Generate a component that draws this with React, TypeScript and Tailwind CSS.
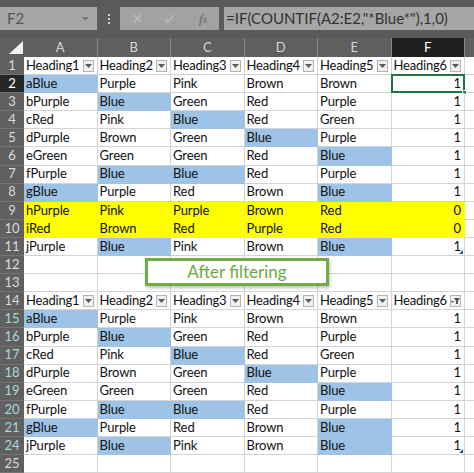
import React from 'react'

const BLUE = '#9dc3e6'
const YELLOW = '#ffff00'
const GRID = '#d4d4d4'
const FONT = { fontFamily: 'Lato, "Liberation Sans", sans-serif' }

const top: string[][] = [
  ['aBlue', 'Purple', 'Pink', 'Brown', 'Brown', '1'],
  ['bPurple', 'Blue', 'Green', 'Red', 'Purple', '1'],
  ['cRed', 'Pink', 'Blue', 'Red', 'Green', '1'],
  ['dPurple', 'Brown', 'Green', 'Blue', 'Purple', '1'],
  ['eGreen', 'Green', 'Green', 'Red', 'Blue', '1'],
  ['fPurple', 'Blue', 'Blue', 'Red', 'Purple', '1'],
  ['gBlue', 'Purple', 'Red', 'Brown', 'Blue', '1'],
  ['hPurple', 'Pink', 'Purple', 'Brown', 'Red', '0'],
  ['iRed', 'Brown', 'Red', 'Purple', 'Red', '0'],
  ['jPurple', 'Blue', 'Pink', 'Brown', 'Blue', '1'],
]

const headings = ['Heading1', 'Heading2', 'Heading3', 'Heading4', 'Heading5', 'Heading6']
const cols = ['A', 'B', 'C', 'D', 'E', 'F']

type RowDef =
  | { n: number; kind: 'head'; filtered?: boolean }
  | { n: number; kind: 'data'; values: string[]; teal?: boolean; active?: boolean; handle?: boolean }
  | { n: number; kind: 'empty'; teal?: boolean }

const rows: RowDef[] = [
  { n: 1, kind: 'head' },
  ...top.map((v, i): RowDef => ({ n: i + 2, kind: 'data', values: v, active: i === 0, handle: i === 9 })),
  { n: 12, kind: 'empty' },
  { n: 13, kind: 'empty' },
  { n: 14, kind: 'head', filtered: true },
  ...[0, 1, 2, 3, 4, 5, 6, 9].map((i): RowDef => ({
    n: i + 15,
    kind: 'data',
    values: top[i],
    teal: true,
    handle: i === 9,
  })),
  { n: 25, kind: 'empty' },
]

function DropButton({ filtered }: { filtered?: boolean }) {
  return (
    <div className="ml-auto mr-[3px] flex h-[12px] w-[11px] shrink-0 items-center justify-center border border-[#b4b4b4] bg-[#f0f0f0]">
      {filtered ? (
        <svg width="9" height="8" viewBox="0 0 9 8">
          <path d="M3 1h6L7 4v3H5V4z" fill="#555" />
          <path d="M0 4h3L1.5 6z" fill="#555" />
        </svg>
      ) : (
        <svg width="7" height="4" viewBox="0 0 7 4">
          <path d="M0 0h7L3.5 4z" fill="#5a5a5a" />
        </svg>
      )}
    </div>
  )
}

function RowHeader({ n, teal, active }: { n: number; teal?: boolean; active?: boolean }) {
  const color = active ? 'text-white bg-[#262626]' : teal ? 'text-[#a6d9dc] bg-[#606060]' : 'text-[#dadada] bg-[#606060]'
  return (
    <div className={`flex items-center justify-center border-b border-[#747474] text-[13px] ${color}`}>
      {n}
    </div>
  )
}

function SheetRow({ row }: { row: RowDef }) {
  if (row.kind === 'head') {
    return (
      <>
        <RowHeader n={row.n} />
        {headings.map((h, i) => (
          <div key={h} className="flex items-center border-b border-r border-[#d4d4d4] bg-white pl-[2px] text-[13px] tracking-[-0.2px] text-[#111]">
            <span>{h}</span>
            <DropButton filtered={row.filtered && i === 5} />
          </div>
        ))}
        <div className="border-b border-[#d4d4d4] bg-white" />
      </>
    )
  }
  if (row.kind === 'empty') {
    return (
      <>
        <RowHeader n={row.n} />
        {cols.map((c) => (
          <div key={c} className="border-b border-r border-[#d4d4d4] bg-white" />
        ))}
        <div className="border-b border-[#d4d4d4] bg-white" />
      </>
    )
  }
  const zero = row.values[5] === '0'
  return (
    <>
      <RowHeader n={row.n} teal={row.teal} active={row.active} />
      {row.values.map((v, i) => {
        const blue = i < 5 && v.includes('Blue')
        const fill = zero ? YELLOW : blue ? BLUE : '#ffffff'
        const line = zero || blue ? fill : GRID
        const isNum = i === 5
        return (
          <div
            key={i}
            className={`relative flex items-center border-b border-r text-[13px] tracking-[-0.1px] text-[#111] ${isNum ? 'justify-end pr-[3px]' : 'pl-[2px]'}`}
            style={{ backgroundColor: fill, borderColor: line }}
          >
            {v}
            {isNum && row.active && (
              <div className="absolute -left-[1px] -top-[1px] bottom-[-1px] right-[-1px] border-2 border-[#217346]">
                <div className="absolute -bottom-[4px] -right-[4px] h-[5px] w-[5px] border border-white bg-[#217346]" />
              </div>
            )}
            {isNum && row.handle && (
              <svg className="absolute bottom-[1px] right-[1px]" width="4" height="4" viewBox="0 0 4 4">
                <path d="M4 0v4H0z" fill="#2f5597" />
              </svg>
            )}
          </div>
        )
      })}
      <div className="border-b border-[#d4d4d4] bg-white" />
    </>
  )
}

function FormulaBar() {
  return (
    <div className="flex h-[38px] items-start bg-[#5a5a5a] pt-[7px]">
      <div className="flex h-[23px] w-[97px] items-center bg-[#a6a6a6] pl-[7px] pr-[8px] text-[15px] text-[#555]">
        <span>F2</span>
        <svg className="ml-auto" width="7" height="4" viewBox="0 0 7 4">
          <path d="M0 0h7L3.5 4z" fill="#7a7a7a" />
        </svg>
      </div>
      <div className="flex h-[23px] w-[23px] flex-col items-center justify-center gap-[2px]">
        <div className="h-[2px] w-[2px] bg-[#cfcfcf]" />
        <div className="h-[2px] w-[2px] bg-[#cfcfcf]" />
        <div className="h-[2px] w-[2px] bg-[#cfcfcf]" />
      </div>
      <div className="flex h-[23px] w-[99px] items-center bg-[#a2a2a2]">
        <svg className="ml-[13px]" width="9" height="9" viewBox="0 0 9 9">
          <path d="M1 1l7 7M8 1L1 8" stroke="#bdbdbd" strokeWidth="1.4" />
        </svg>
        <svg className="ml-[22px]" width="11" height="9" viewBox="0 0 11 9">
          <path d="M1 5l3 3 6-7" stroke="#bdbdbd" strokeWidth="1.4" fill="none" />
        </svg>
        <span className="ml-[24px] text-[13px] italic text-[#666]" style={{ fontFamily: '"Liberation Serif", serif' }}>
          f<span className="text-[10px]">x</span>
        </span>
      </div>
      <div className="ml-[5px] flex h-[23px] flex-1 items-center bg-[#a6a6a6] pl-[2px] text-[15px] text-[#333]">
        =IF(COUNTIF(A2:E2,"*Blue*"),1,0)
      </div>
    </div>
  )
}

function ColumnHeaders() {
  return (
    <>
      <div className="flex items-end justify-end bg-[#5f5f5f] pb-[3px] pr-[1px]">
        <svg width="14" height="13" viewBox="0 0 14 13">
          <path d="M14 0v13H0z" fill="#f2f2f2" />
        </svg>
      </div>
      {cols.map((c) => (
        <div
          key={c}
          className={`flex items-center justify-center border-r border-[#8a8a8a] text-[13px] ${
            c === 'F' ? 'bg-[#1f1f1f] text-white' : 'bg-[#5f5f5f] text-[#d6d6d6]'
          }`}
        >
          {c}
        </div>
      ))}
      <div className="bg-[#5f5f5f]" />
    </>
  )
}

export default function App() {
  return (
    <div className="relative h-[473px] w-[474px] overflow-hidden bg-[#5f5f5f]" style={FONT}>
      <FormulaBar />
      <div className="grid grid-cols-[24px_repeat(6,73.5px)_1fr] grid-rows-[19px] auto-rows-[18.1px]">
        <ColumnHeaders />
        {rows.map((r) => (
          <SheetRow key={r.n} row={r} />
        ))}
      </div>

      {/* callout over rows 12-13 */}
      <div className="absolute left-[145px] top-[258px] flex h-[28px] w-[184px] items-center justify-center border-[3px] border-[#70ad47] bg-white text-[17px] text-[#6aab3c] shadow-[1px_2px_3px_rgba(0,0,0,0.25)]">
        After filtering
      </div>
    </div>
  )
}
